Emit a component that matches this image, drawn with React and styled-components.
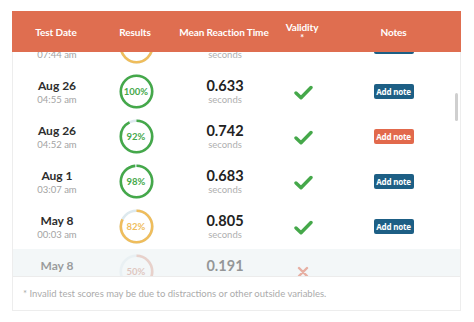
import React, { useLayoutEffect, useRef } from 'react';
import styled, { createGlobalStyle } from 'styled-components';

const colors = {
  header: '#df6e50',
  blue: '#1d5f85',
  orange: '#e2694c',
  green: '#45a84a',
  amber: '#efbd5c',
  faded: '#dba595',
  track: '#dde9ee',
};

const GlobalStyle = createGlobalStyle`
  body {
    margin: 0;
    background: #fff;
    font-family: Lato, "Open Sans", sans-serif;
  }
`;

const Page = styled.div`
  padding: 11px 13px 0 12px;
`;

const Card = styled.div`
  width: 449px;
  height: 300px;
  box-sizing: border-box;
  border: 1px solid #ededed;
  border-top: none;
  display: flex;
  flex-direction: column;
  background: #fff;
`;

const cols = '88px 70px 108px 48px 1fr';

const Header = styled.div`
  position: relative;
  z-index: 1;
  flex: none;
  display: grid;
  grid-template-columns: ${cols};
  height: 41px;
  margin: 0 -1px;
  background: ${colors.header};
  color: #fff;
  font-size: 10px;
  font-weight: 700;
  letter-spacing: -0.1px;
`;

const HeadCell = styled.div`
  display: flex;
  flex-direction: column;
  align-items: center;
  justify-content: center;
  line-height: 11px;
  padding-top: ${(p) => (p.$stack ? '0' : '1px')};
`;

const Star = styled.span`
  font-size: 9px;
  line-height: 9px;
`;

const Viewport = styled.div`
  position: relative;
  height: 224px;
  flex: none;
  overflow: hidden;
`;

const Scroller = styled.div`
  height: 100%;
  overflow: hidden;
`;

const Thumb = styled.div`
  position: absolute;
  right: 2px;
  top: 41px;
  width: 3px;
  height: 28px;
  border-radius: 2px;
  background: #cfcfcf;
`;

const Row = styled.div`
  display: grid;
  grid-template-columns: ${cols};
  height: 45px;
  align-items: center;
  background: ${(p) => (p.$invalid ? '#f3f7f8' : '#fff')};
  & > * {
    opacity: ${(p) => (p.$invalid ? 0.45 : 1)};
  }
`;

const Cell = styled.div`
  display: flex;
  flex-direction: column;
  align-items: center;
  justify-content: center;
  padding-top: ${(p) => p.$shift || 0}px;
`;

const DateText = styled.div`
  font-size: 12px;
  font-weight: 700;
  color: #2e2e2e;
  line-height: 15px;
`;

const TimeText = styled.div`
  font-size: 9.5px;
  color: #a3a3a3;
  line-height: 13px;
`;

const Mean = styled.div`
  font-size: 14.5px;
  font-weight: 700;
  color: #222;
  line-height: 16px;
`;

const Seconds = styled.div`
  font-size: 9.5px;
  color: #b0b0b0;
  line-height: 12px;
`;

const RingWrap = styled.div`
  position: relative;
  width: 35px;
  height: 35px;
`;

const RingLabel = styled.span`
  position: absolute;
  inset: 0;
  display: flex;
  align-items: center;
  justify-content: center;
  font-size: 9.5px;
  font-weight: 700;
  color: ${(p) => p.$color};
`;

const NoteButton = styled.button`
  width: 40px;
  height: 15px;
  padding: 0;
  border: none;
  border-radius: 2px;
  background: ${(p) => (p.$accent ? colors.orange : colors.blue)};
  color: #fff;
  font-family: "Noto Sans", sans-serif;
  font-size: 8px;
  font-weight: 700;
  letter-spacing: -0.2px;
`;

const Footer = styled.div`
  flex: 1;
  border-top: 1px solid #ececec;
  display: flex;
  align-items: center;
  padding: 0 0 0 10px;
  font-size: 9.5px;
  color: #ababab;
`;

const rows = [
  { date: 'Aug 27', time: '07:44 am', pct: 80, mean: '0.711', pending: true },
  { date: 'Aug 26', time: '04:55 am', pct: 100, mean: '0.633' },
  { date: 'Aug 26', time: '04:52 am', pct: 92, mean: '0.742', accent: true },
  { date: 'Aug 1', time: '03:07 am', pct: 98, mean: '0.683' },
  { date: 'May 8', time: '00:03 am', pct: 82, mean: '0.805' },
  { date: 'May 8', time: '00:01 am', pct: 50, mean: '0.191', invalid: true },
];

function ringColor(row) {
  if (row.invalid) return colors.faded;
  return row.pct >= 90 ? colors.green : colors.amber;
}

function Ring({ row }) {
  const r = 15.7;
  const c = 2 * Math.PI * r;
  const col = ringColor(row);
  return (
    <RingWrap>
      <svg width="35" height="35" viewBox="0 0 35 35">
        <circle cx="17.5" cy="17.5" r={r} fill="none" stroke={colors.track} strokeWidth="2.6" />
        <circle
          cx="17.5"
          cy="17.5"
          r={r}
          fill="none"
          stroke={col}
          strokeWidth="2.6"
          strokeDasharray={`${(c * row.pct) / 100} ${c}`}
          transform="rotate(-90 17.5 17.5)"
        />
      </svg>
      <RingLabel $color={row.invalid ? '#c98d7d' : col}>{row.pct}%</RingLabel>
    </RingWrap>
  );
}

const Check = () => (
  <svg width="19" height="15" viewBox="0 0 19 15">
    <path d="M2 8 L7 12.8 L17 2.5" fill="none" stroke={colors.green} strokeWidth="3.4" strokeLinecap="round" strokeLinejoin="round" />
  </svg>
);

const Cross = () => (
  <svg width="12" height="12" viewBox="0 0 12 12">
    <path d="M2 2 L10 10 M10 2 L2 10" fill="none" stroke="#d9593c" strokeWidth="2.4" strokeLinecap="round" />
  </svg>
);

function Validity({ row }) {
  if (row.pending) return null;
  return row.invalid ? <Cross /> : <Check />;
}

export default function App() {
  const scroller = useRef(null);

  useLayoutEffect(() => {
    if (scroller.current) scroller.current.scrollTop = 28;
  }, []);

  return (
    <Page>
      <GlobalStyle />
      <Card>
        <Header>
          <HeadCell>Test Date</HeadCell>
          <HeadCell>Results</HeadCell>
          <HeadCell>Mean Reaction Time</HeadCell>
          <HeadCell $stack>
            <span>Validity</span>
            <Star>*</Star>
          </HeadCell>
          <HeadCell>Notes</HeadCell>
        </Header>
        <Viewport>
          <Scroller ref={scroller}>
            {rows.map((row, i) => (
              <Row key={i} $invalid={row.invalid}>
                <Cell>
                  <DateText>{row.date}</DateText>
                  <TimeText>{row.time}</TimeText>
                </Cell>
                <Cell>
                  <Ring row={row} />
                </Cell>
                <Cell>
                  <Mean>{row.mean}</Mean>
                  <Seconds>seconds</Seconds>
                </Cell>
                <Cell $shift={1}>
                  <Validity row={row} />
                </Cell>
                <Cell>
                  {!row.invalid && <NoteButton $accent={row.accent}>Add note</NoteButton>}
                </Cell>
              </Row>
            ))}
          </Scroller>
          <Thumb />
        </Viewport>
        <Footer>* Invalid test scores may be due to distractions or other outside variables.</Footer>
      </Card>
    </Page>
  );
}
